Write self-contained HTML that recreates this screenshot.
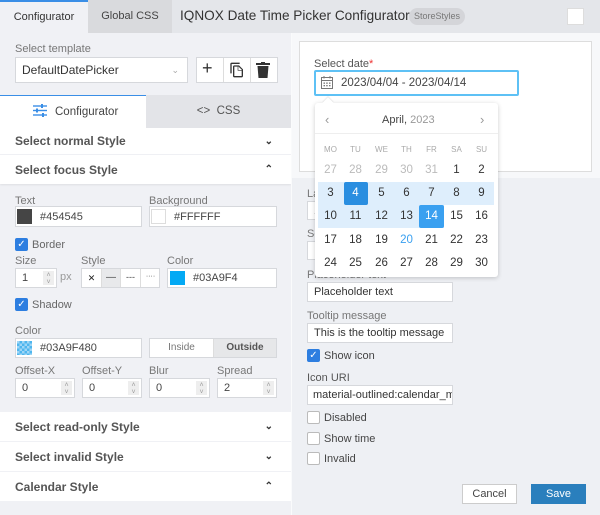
<!DOCTYPE html>
<html><head><style>
*{box-sizing:border-box;margin:0;padding:0}
body{width:600px;height:515px;overflow:hidden;background:#eef0f4;font-family:"Liberation Sans",sans-serif;color:#454545;position:relative;font-size:11px}
.a{position:absolute}
.inp{position:absolute;background:#fff;border:1px solid #d6d8dc;font-size:11px;padding-left:6px;display:flex;align-items:center}
.lbl{position:absolute;font-size:11px;color:#777}
.hd{position:absolute;left:0;width:291px;background:#fff;font-weight:bold;font-size:12px;color:#555;padding-left:15px;display:flex;align-items:center}
.hd span{position:absolute;right:18px;font-size:10px;color:#333}
.cb{position:absolute;width:13px;height:13px;border:1px solid #bbb;background:#fff;border-radius:2px}
.cb.on{background:#2d7ee0;border-color:#2d7ee0;color:#fff;font-size:10px;line-height:12px;text-align:center}
.spin{position:absolute;right:2px;top:2px;bottom:2px;width:11px;background:#eee;color:#999;font-size:7px;line-height:7px;text-align:center;padding-top:1px}
.cal div{position:absolute;width:25px;text-align:center;font-size:11.5px;color:#333}
</style></head><body>
<div class="a" style="left:0;top:0;width:600px;height:33px;background:#e4e6ea"></div>
<div class="a" style="left:0;top:0;width:88px;height:33px;background:#f0f1f5;border-top:2px solid #3a8ee6;font-size:11px;text-align:center;line-height:31px;color:#333">Configurator</div>
<div class="a" style="left:88px;top:0;width:84px;height:33px;background:#d9dadd;font-size:11px;text-align:center;line-height:33px;color:#444">Global CSS</div>
<div class="a" style="left:180px;top:8px;font-size:13.6px;color:#333;white-space:nowrap">IQNOX Date Time Picker Configurator</div>
<div class="a" style="left:409px;top:8px;width:56px;height:17px;border-radius:9px;background:#d4d5d9;font-size:9px;color:#777;text-align:center;line-height:17px">StoreStyles</div>
<div class="a" style="left:567px;top:8px;width:17px;height:17px;background:#fff;border:1px solid #ddd"></div>
<div class="a" style="left:0;top:33px;width:291px;height:482px;background:#f0f1f5"></div>
<div class="lbl" style="left:15px;top:43px">Select template</div>
<div class="inp" style="left:15px;top:57px;width:173px;height:26px;font-size:12px;color:#333">DefaultDatePicker<span style="position:absolute;right:8px;color:#aaa;font-size:9px">&#8964;</span></div>
<div class="inp" style="left:196px;top:57px;width:82px;height:26px;padding:0"></div>
<div class="a" style="left:223px;top:58px;width:1px;height:24px;background:#ddd"></div>
<div class="a" style="left:250px;top:58px;width:1px;height:24px;background:#ddd"></div>
<div class="a" style="left:202px;top:58px;font-size:18px;color:#333">+</div>
<svg class="a" style="left:229px;top:62px" width="16" height="16" viewBox="0 0 24 24"><path d="M16 1H4c-1.1 0-2 .9-2 2v14h2V3h12V1zm-1 4l6 6v10c0 1.1-.9 2-2 2H8c-1.1 0-2-.9-2-2V7c0-1.1.9-2 2-2h7zm-1 7V6.5L19.5 12H14z M8 7v14h11v-8h-6V7z" fill="#333" fill-rule="evenodd"/></svg>
<svg class="a" style="left:256px;top:62px" width="14" height="16" viewBox="0 0 14 16"><rect x="0" y="1" width="14" height="2" fill="#333"/><rect x="5" y="0" width="4" height="2" fill="#333"/><path d="M1.5 4h11l-1 12h-9z" fill="#333"/></svg>
<div class="a" style="left:0;top:95px;width:146px;height:33px;background:#fff;border-top:1px solid #3a8ee6;font-size:11.5px;color:#444;line-height:32px;padding-left:55px">Configurator</div>
<svg class="a" style="left:33px;top:104px" width="14" height="13" viewBox="0 0 14 13"><g stroke="#3a8ee6" stroke-width="1.4"><line x1="0" y1="2" x2="14" y2="2"/><line x1="0" y1="6.5" x2="14" y2="6.5"/><line x1="0" y1="11" x2="14" y2="11"/></g><g fill="#3a8ee6"><rect x="8" y="0" width="2" height="4"/><rect x="3" y="4.5" width="2" height="4"/><rect x="9" y="9" width="2" height="4"/></g></svg>
<div class="a" style="left:146px;top:95px;width:145px;height:33px;background:#e3e4e8;font-size:11.5px;color:#555;line-height:33px;text-align:center">&lt;&gt;&nbsp; CSS</div>
<div class="hd" style="top:128px;height:26px">Select normal Style<span>&#8964;</span></div>
<div class="hd" style="top:155px;height:29px;box-shadow:0 1px 2px rgba(0,0,0,.08)">Select focus Style<span>&#8963;</span></div>
<div class="lbl" style="left:15px;top:195px">Text</div>
<div class="inp" style="left:15px;top:206px;width:127px;height:21px;padding-left:24px">#454545</div>
<div class="a" style="left:17px;top:209px;width:15px;height:15px;background:#454545"></div>
<div class="lbl" style="left:149px;top:195px">Background</div>
<div class="inp" style="left:149px;top:206px;width:128px;height:21px;padding-left:24px">#FFFFFF</div>
<div class="a" style="left:151px;top:209px;width:15px;height:15px;border:1px solid #ddd"></div>
<div class="cb on" style="left:15px;top:238px">&#10003;</div><div class="lbl" style="left:32px;top:239px;color:#666">Border</div>
<div class="lbl" style="left:15px;top:255px">Size</div>
<div class="inp" style="left:15px;top:268px;width:42px;height:20px">1<div class="spin">&#708;<br>&#709;</div></div>
<div class="lbl" style="left:60px;top:271px;color:#999">px</div>
<div class="lbl" style="left:81px;top:255px">Style</div>
<div class="inp" style="left:81px;top:268px;width:79px;height:20px;padding:0"></div>
<div class="a" style="left:82px;top:269px;width:19px;height:18px;text-align:center;line-height:18px;font-size:9px;color:#222">&#10005;</div>
<div class="a" style="left:101px;top:269px;width:20px;height:18px;background:#e8e9eb;border-left:1px solid #ddd;border-right:1px solid #ddd;text-align:center;line-height:17px;font-size:10px">&mdash;</div>
<div class="a" style="left:121px;top:269px;width:20px;height:18px;border-right:1px solid #ddd;text-align:center;line-height:16px;font-size:9px">---</div>
<div class="a" style="left:141px;top:269px;width:19px;height:18px;text-align:center;line-height:16px;font-size:7px">&middot;&middot;&middot;&middot;</div>
<div class="lbl" style="left:167px;top:255px">Color</div>
<div class="inp" style="left:167px;top:268px;width:110px;height:20px;padding-left:25px">#03A9F4</div>
<div class="a" style="left:170px;top:271px;width:15px;height:14px;background:#03A9F4"></div>
<div class="cb on" style="left:15px;top:298px">&#10003;</div><div class="lbl" style="left:32px;top:299px;color:#666">Shadow</div>
<div class="lbl" style="left:15px;top:325px">Color</div>
<div class="inp" style="left:15px;top:338px;width:127px;height:20px;padding-left:24px">#03A9F480</div>
<div class="a" style="left:17px;top:341px;width:15px;height:14px;background:repeating-conic-gradient(#4fb6ee 0 25%,#9fd6f6 0 50%) 0 0/5px 5px"></div>
<div class="inp" style="left:149px;top:338px;width:128px;height:20px;padding:0"></div>
<div class="a" style="left:150px;top:339px;width:63px;height:18px;font-size:10px;color:#777;text-align:center;line-height:18px">Inside</div>
<div class="a" style="left:213px;top:339px;width:63px;height:18px;background:#e6e7e9;font-size:10px;font-weight:bold;color:#555;text-align:center;line-height:18px;border-left:1px solid #ddd">Outside</div>
<div class="lbl" style="left:15px;top:365px">Offset-X</div>
<div class="lbl" style="left:82px;top:365px">Offset-Y</div>
<div class="lbl" style="left:149px;top:365px">Blur</div>
<div class="lbl" style="left:217px;top:365px">Spread</div>
<div class="inp" style="left:15px;top:378px;width:60px;height:20px">0<div class="spin">&#708;<br>&#709;</div></div>
<div class="inp" style="left:82px;top:378px;width:60px;height:20px">0<div class="spin">&#708;<br>&#709;</div></div>
<div class="inp" style="left:149px;top:378px;width:61px;height:20px">0<div class="spin">&#708;<br>&#709;</div></div>
<div class="inp" style="left:217px;top:378px;width:60px;height:20px">2<div class="spin">&#708;<br>&#709;</div></div>
<div class="hd" style="top:412px;height:29px">Select read-only Style<span>&#8964;</span></div>
<div class="hd" style="top:442px;height:29px">Select invalid Style<span>&#8964;</span></div>
<div class="hd" style="top:472px;height:29px">Calendar Style<span>&#8963;</span></div>
<div class="a" style="left:291px;top:33px;width:1px;height:482px;background:#fafbfc"></div>
<div class="a" style="left:292px;top:33px;width:308px;height:145px;background:#f7f8fa"></div>
<div class="a" style="left:299px;top:41px;width:293px;height:131px;background:#fff;border:1px solid #ddd"></div>
<div class="lbl" style="left:314px;top:58px;color:#555">Select date<span style="color:#e33">*</span></div>
<div class="a" style="left:314px;top:70px;width:205px;height:26px;border:2px solid #5ec1f5;border-radius:2px;background:#fff;font-size:11.5px;color:#444;padding-left:25px;line-height:22px">2023/04/04 - 2023/04/14</div>
<svg class="a" style="left:321px;top:76px" width="12" height="13" viewBox="0 0 12 13"><rect x="0.5" y="1.5" width="11" height="11" fill="none" stroke="#777"/><line x1="0" y1="4.5" x2="12" y2="4.5" stroke="#777"/><line x1="3" y1="0" x2="3" y2="2.5" stroke="#777"/><line x1="9" y1="0" x2="9" y2="2.5" stroke="#777"/><g fill="#777"><rect x="2.5" y="6.5" width="1.5" height="1.3"/><rect x="5.2" y="6.5" width="1.5" height="1.3"/><rect x="8" y="6.5" width="1.5" height="1.3"/><rect x="2.5" y="9" width="1.5" height="1.3"/><rect x="5.2" y="9" width="1.5" height="1.3"/><rect x="8" y="9" width="1.5" height="1.3"/></g></svg>
<div class="lbl" style="left:307px;top:188px">La</div>
<div class="inp" style="left:307px;top:201px;width:20px;height:19px">1</div>
<div class="lbl" style="left:307px;top:228px">Se</div>
<div class="inp" style="left:307px;top:241px;width:20px;height:19px"></div>
<div class="lbl" style="left:307px;top:269px">Placeholder text</div>
<div class="inp" style="left:307px;top:282px;width:146px;height:20px;color:#333">Placeholder text</div>
<div class="lbl" style="left:307px;top:310px">Tooltip message</div>
<div class="inp" style="left:307px;top:323px;width:146px;height:20px;color:#333">This is the tooltip message</div>
<div class="cb on" style="left:307px;top:349px">&#10003;</div><div class="lbl" style="left:324px;top:350px;color:#444">Show icon</div>
<div class="lbl" style="left:307px;top:372px;color:#555">Icon URI</div>
<div class="inp" style="left:307px;top:385px;width:146px;height:20px;color:#333;overflow:hidden;white-space:nowrap;padding-left:5px">material-outlined:calendar_mo</div>
<div class="cb" style="left:307px;top:411px"></div><div class="lbl" style="left:324px;top:412px;color:#444">Disabled</div>
<div class="cb" style="left:307px;top:432px"></div><div class="lbl" style="left:324px;top:433px;color:#444">Show time</div>
<div class="cb" style="left:307px;top:452px"></div><div class="lbl" style="left:324px;top:453px;color:#444">Invalid</div>
<div class="a" style="left:462px;top:484px;width:55px;height:20px;background:#fff;border:1px solid #ccc;font-size:11px;text-align:center;line-height:18px;color:#444">Cancel</div>
<div class="a" style="left:531px;top:484px;width:55px;height:20px;background:#2a7fbd;font-size:11px;text-align:center;line-height:20px;color:#fff">Save</div>
<div class="a" style="left:315px;top:103px;width:183px;height:174px;background:#fff;border-radius:3px;box-shadow:0 1px 5px rgba(0,0,0,.2)"></div>
<div class="a" style="left:324px;top:99px;width:8px;height:8px;background:#fff;transform:rotate(45deg);box-shadow:-1px -1px 1px rgba(0,0,0,.08)"></div>
<div class="a" style="left:315px;top:133px;width:183px;height:1px;background:#eee"></div>
<div class="a" style="left:325px;top:112px;font-size:13px;color:#999">&#8249;</div>
<div class="a" style="left:480px;top:112px;font-size:13px;color:#999">&#8250;</div>
<div class="a" style="left:382px;top:114px;font-size:11px;color:#444">April, <span style="color:#999">2023</span></div>
<div class="a" style="left:318px;top:182px;width:176px;height:23px;background:#deeefc"></div>
<div class="a" style="left:318px;top:205px;width:126px;height:23px;background:#deeefc"></div>
<div class="a" style="left:344px;top:182px;width:24px;height:23px;background:#2a8ee0;border-radius:2px"></div>
<div class="a" style="left:419px;top:205px;width:25px;height:23px;background:#3aa0f0;border-radius:2px"></div>
<div class="cal">
<div style="left:318px;top:145px;font-size:8px;color:#aaa">MO</div><div style="left:343px;top:145px;font-size:8px;color:#aaa">TU</div><div style="left:369px;top:145px;font-size:8px;color:#aaa">WE</div><div style="left:394px;top:145px;font-size:8px;color:#aaa">TH</div><div style="left:419px;top:145px;font-size:8px;color:#aaa">FR</div><div style="left:444px;top:145px;font-size:8px;color:#aaa">SA</div><div style="left:469px;top:145px;font-size:8px;color:#aaa">SU</div>
<div style="left:318px;top:164px;color:#bbb">27</div><div style="left:343px;top:164px;color:#bbb">28</div><div style="left:369px;top:164px;color:#bbb">29</div><div style="left:394px;top:164px;color:#bbb">30</div><div style="left:419px;top:164px;color:#bbb">31</div><div style="left:444px;top:164px">1</div><div style="left:469px;top:164px">2</div>
<div style="left:318px;top:187px">3</div><div style="left:343px;top:187px;color:#fff">4</div><div style="left:369px;top:187px">5</div><div style="left:394px;top:187px">6</div><div style="left:419px;top:187px">7</div><div style="left:444px;top:187px">8</div><div style="left:469px;top:187px">9</div>
<div style="left:318px;top:210px">10</div><div style="left:343px;top:210px">11</div><div style="left:369px;top:210px">12</div><div style="left:394px;top:210px">13</div><div style="left:419px;top:210px;color:#fff">14</div><div style="left:444px;top:210px">15</div><div style="left:469px;top:210px">16</div>
<div style="left:318px;top:234px">17</div><div style="left:343px;top:234px">18</div><div style="left:369px;top:234px">19</div><div style="left:394px;top:234px;color:#3aa0f0">20</div><div style="left:419px;top:234px">21</div><div style="left:444px;top:234px">22</div><div style="left:469px;top:234px">23</div>
<div style="left:318px;top:257px">24</div><div style="left:343px;top:257px">25</div><div style="left:369px;top:257px">26</div><div style="left:394px;top:257px">27</div><div style="left:419px;top:257px">28</div><div style="left:444px;top:257px">29</div><div style="left:469px;top:257px">30</div>
</div>
</body></html>
